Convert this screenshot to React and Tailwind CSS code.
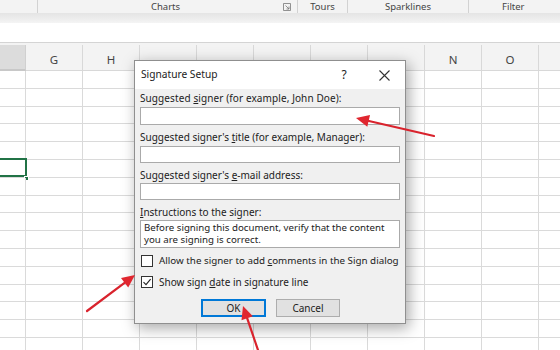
import React from "react";

const FONT = { fontFamily: '"Noto Sans", "Open Sans", Arial, sans-serif' };
const cols = ["G", "H", "I", "J", "K", "L", "M", "N", "O", "P"];
const SHOWN = ["G", "H", "N", "O"];
const ROWS = 16;

function U({ children }) {
  return <span className="underline underline-offset-[1px]">{children}</span>;
}

function Arrow({ x1, y1, x2, y2 }) {
  const dx = x2 - x1;
  const dy = y2 - y1;
  const len = Math.sqrt(dx * dx + dy * dy);
  const ux = dx / len;
  const uy = dy / len;
  const hl = 13;
  const hw = 6;
  const bx = x2 - ux * hl;
  const by = y2 - uy * hl;
  const p1 = `${x2},${y2}`;
  const p2 = `${bx - uy * hw},${by + ux * hw}`;
  const p3 = `${bx + uy * hw},${by - ux * hw}`;
  return (
    <g>
      <line x1={x1} y1={y1} x2={bx + ux * 2} y2={by + uy * 2} stroke="#d9232d" strokeWidth="2.2" strokeLinecap="round" />
      <polygon points={`${p1} ${p2} ${p3}`} fill="#e0262f" />
    </g>
  );
}

function Input({ className = "", children }) {
  return <div className={`border border-[#aaaaaa] bg-white ${className}`}>{children}</div>;
}

function Checkbox({ checked }) {
  return (
    <div className="flex h-[12px] w-[12px] shrink-0 items-center justify-center border border-[#333333] bg-white">
      {checked && (
        <svg width="10" height="10" viewBox="0 0 10 10">
          <path d="M1.5 5.2 L4 7.6 L8.6 2.2" fill="none" stroke="#222" strokeWidth="1.1" />
        </svg>
      )}
    </div>
  );
}

export default function App() {
  return (
    <div className="relative h-[350px] w-[560px] overflow-hidden bg-white text-[#222222]" style={FONT}>
      {/* Ribbon group labels */}
      <div className="flex h-[13px] bg-[#f3f3f3] text-[9.5px] leading-[13px] text-[#444444]">
        <div className="w-[38px] shrink-0 border-r border-[#d2d2d2]" />
        <div className="flex w-[260px] shrink-0 border-r border-[#d2d2d2]">
          <div className="flex flex-1 justify-center pl-[10px]">Charts</div>
          <div className="flex w-[14px] items-center">
            <svg width="8" height="8" viewBox="0 0 8 8">
              <path d="M0.5 0.5 H7.5 V7.5 H0.5 Z" fill="none" stroke="#777" strokeWidth="0.8" />
              <path d="M2.5 2.5 L6 6 M6 3.5 V6 H3.5" fill="none" stroke="#777" strokeWidth="0.8" />
            </svg>
          </div>
        </div>
        <div className="flex w-[50px] shrink-0 justify-center border-r border-[#d2d2d2]">Tours</div>
        <div className="flex w-[121px] shrink-0 justify-center border-r border-[#d2d2d2]">Sparklines</div>
        <div className="flex-1 pl-[33px]">Filter</div>
      </div>
      <div className="h-[10px] bg-gradient-to-b from-[#e4e4e4] to-[#f4f4f4]" />
      {/* formula bar area */}
      <div className="h-[20px] border-b border-[#d4d4d4] bg-white" />
      <div className="h-[2px] bg-[#f3f3f3]" />
      {/* column headers */}
      <div className="flex h-[26px] bg-[#f3f3f3] text-[11.5px] text-[#444444]">
        <div className="w-[26px] shrink-0 border-b-2 border-r border-b-[#c8c8c8] border-r-[#d0d0d0] bg-[#dcdcdc]" />
        {cols.map((c) => (
          <div key={c} className="flex w-[57px] shrink-0 items-center justify-center border-b border-r border-[#d8d8d8] pt-[5px]">
            {SHOWN.includes(c) ? c : ""}
          </div>
        ))}
      </div>
      {/* grid */}
      <div>
        {Array.from({ length: ROWS }).map((_, r) => (
          <div key={r} className="flex h-[17.8px] border-b border-[#dadada]">
            <div className="relative w-[26px] shrink-0 border-r border-[#dadada]">
              {r === 5 && (
                <>
                  <div className="absolute left-[-2px] top-[-2px] h-[19px] w-[29px] border-2 border-[#217346]" />
                  <div className="absolute bottom-[-4px] right-[-4px] h-[5px] w-[5px] border border-white bg-[#217346]" />
                </>
              )}
            </div>
            {cols.map((c) => (
              <div key={c} className="w-[57px] shrink-0 border-r border-[#dadada]" />
            ))}
          </div>
        ))}
      </div>

      {/* Dialog */}
      <div className="absolute left-[134px] top-[60px] flex h-[264px] w-[272px] flex-col border border-[#8f8f8f] bg-[#f0f0f0] shadow-[3px_4px_14px_rgba(0,0,0,0.35)]">
        <div className="flex h-[28px] items-center bg-white pl-[6px] text-[10.2px]">
          <div className="flex-1">Signature Setup</div>
          <div className="mr-[9px] w-[20px] text-center text-[12px]">?</div>
          <div className="flex w-[42px] items-center justify-center">
            <svg width="11" height="11" viewBox="0 0 11 11">
              <path d="M0.5 0.5 L10.5 10.5 M10.5 0.5 L0.5 10.5" stroke="#333" strokeWidth="1.1" />
            </svg>
          </div>
        </div>
        <div className="flex flex-col px-[5px] text-[10px] leading-[14px]">
          <div className="mt-[2px] h-[14px] whitespace-nowrap tracking-[0.1px]">Suggested <U>s</U>igner (for example, John Doe):</div>
          <Input className="mt-[2px] h-[18px]" />
          <div className="mt-[5px] h-[14px] whitespace-nowrap">Suggested signer's <U>t</U>itle (for example, Manager):</div>
          <Input className="mt-[2px] h-[17px]" />
          <div className="mt-[5px] h-[14px] whitespace-nowrap">Suggested signer's <U>e</U>-mail address:</div>
          <Input className="mt-[1px] h-[17px]" />
          <div className="mt-[5px] h-[14px] whitespace-nowrap"><U>I</U>nstructions to the signer:</div>
          <Input className="mt-[1px] h-[28px] px-[3px] pt-[1px] text-[9.7px] leading-[12px]">
            Before signing this document, verify that the content you are signing is correct.
          </Input>
          <div className="mt-[6px] flex h-[14px] items-center gap-[6px] pl-[1px]">
            <Checkbox />
            <span className="whitespace-nowrap text-[9.8px]">Allow the signer to add <U>c</U>omments in the Sign dialog</span>
          </div>
          <div className="mt-[7px] flex h-[14px] items-center gap-[6px] pl-[1px]">
            <Checkbox checked />
            <span className="whitespace-nowrap">Show sign <U>d</U>ate in signature line</span>
          </div>
          <div className="mt-[10px] flex gap-[10px] pl-[61px]">
            <div className="flex h-[18px] w-[65px] items-center justify-center border-2 border-[#0078d7] bg-[#e1e1e1]">OK</div>
            <div className="flex h-[18px] w-[64px] items-center justify-center border border-[#adadad] bg-[#e1e1e1]">Cancel</div>
          </div>
        </div>
      </div>

      {/* Arrows */}
      <svg className="pointer-events-none absolute left-0 top-0" width="560" height="350" viewBox="0 0 560 350">
        <Arrow x1={434} y1={136} x2={356} y2={118} />
        <Arrow x1={87} y1={311} x2={135} y2={275} />
        <Arrow x1={259} y1={353} x2={243} y2={306} />
      </svg>
    </div>
  );
}
